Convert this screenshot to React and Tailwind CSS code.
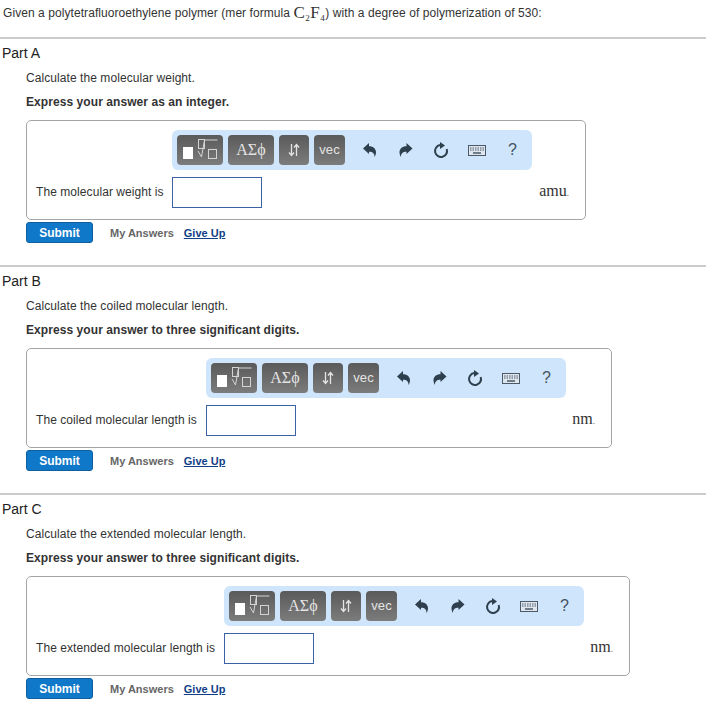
const serif = "font-['Liberation_Serif',serif]";

/** Equation editor toolbar, sits above the answer input */
function Toolbar() {
  return (
    <div className="col-span-2 col-start-2 flex h-10 w-[360px] items-center rounded-md bg-[#cfe5fb] pl-[5px]">
      <button className="flex h-[30px] w-[46px] items-end rounded-[4px] bg-gradient-to-b from-[#5a5a5a] to-[#7c7c7c] pb-[6px] pl-[6px]">
        <span className="h-[12px] w-[10px] bg-white"></span>
        <svg className="ml-[4px]" width="22" height="20" viewBox="0 0 22 20" fill="none" stroke="#d4d4d4" strokeWidth="1">
          <rect x="1.500" y="0.500" width="6" height="9" />
          <path d="M1 12l3.500 6 3-17h13" />
          <rect x="11.500" y="10.500" width="8" height="9" />
        </svg>
      </button>
      <button className={`ml-[5px] h-[30px] w-[46px] rounded-[4px] bg-gradient-to-b from-[#5a5a5a] to-[#7c7c7c] text-[16px] text-[#e4e4e4] ${serif}`}>
        ΑΣϕ
      </button>
      <button className="ml-[5px] flex h-[30px] w-[30px] items-center justify-center rounded-[4px] bg-gradient-to-b from-[#5a5a5a] to-[#7c7c7c]">
        <svg width="14" height="14" viewBox="0 0 14 14" fill="none" stroke="#e4e4e4" strokeWidth="1.300">
          <path d="M4.500 1v11M2 9.500l2.500 3 2.500-3M9.500 13V2M7 4.500l2.500-3 2.500 3" />
        </svg>
      </button>
      <button className="ml-[5px] h-[30px] w-[31px] rounded-[4px] bg-gradient-to-b from-[#5a5a5a] to-[#7c7c7c] text-[13px] text-[#e4e4e4]">
        vec
      </button>
      <svg className="ml-[18px]" width="13" height="14" viewBox="0 0 13 14" fill="#2e3f4e">
        <path d="M0 5.500L6 0v3.300c4.500 0 7 2.700 7 6 0 1.900-.6 3.500-1.500 4.700.2-3.300-1.500-5.300-5.500-5.300V11z" />
      </svg>
      <svg className="ml-[23px]" width="14" height="14" viewBox="0 0 13 14" fill="#2e3f4e">
        <path d="M13 5.500L7 0v3.300c-4.500 0-7 2.700-7 6 0 1.900.6 3.500 1.500 4.700-.2-3.300 1.500-5.300 5.500-5.300V11z" />
      </svg>
      <svg className="ml-[20px]" width="16" height="17" viewBox="0 0 16 17" fill="none" stroke="#2e3f4e" strokeWidth="2">
        <path d="M13.700 7A6 6 0 1 1 7 3.100" />
        <path d="M7 0v7l5-3.500z" fill="#2e3f4e" stroke="none" />
      </svg>
      <svg className="ml-[19px]" width="18" height="11" viewBox="0 0 18 11">
        <rect x="0.500" y="0.500" width="17" height="10" fill="#dfe6ee" stroke="#4a5a6a" />
        <path d="M2 3h14M2 5h14" stroke="#4a5a6a" strokeWidth="1" strokeDasharray="1.500 1" />
        <path d="M5 8h8" stroke="#4a5a6a" strokeWidth="1.500" />
      </svg>
      <span className="ml-[22px] text-[16px] text-[#44525f]">?</span>
    </div>
  );
}

/** One question part: prompt, answer box and action row */
function Part({ name, prompt, express, label, unit, boxClass }) {
  return (
    <section className="border-t-2 border-[#cccccc] pt-[5px]">
      <h3 className="ml-[2px] h-[18px] text-[14px] leading-[18px] font-normal tracking-normal text-[#222]">{name}</h3>
      <div className="pl-[26px]">
        <p className="mt-[8px] h-[16px] leading-[16px]">{prompt}</p>
        <p className="mt-[8px] h-[16px] leading-[16px] font-bold">{express}</p>
        <div className={`mt-[10px] grid h-[100px] content-start rounded-[5px] border border-[#a5a5a5] pt-[9px] pl-[9px] ${boxClass}`}>
          <Toolbar />
          <span className="col-start-1 mt-[7px] mb-[2px] self-center">{label}</span>
          <input className="mt-[7px] h-[31px] w-[90px] border border-[#3a62a5] bg-white" />
          <span className={`mt-[7px] mr-[16px] mb-[3px] self-center text-right text-[16px] tracking-normal ${serif}`}>
            {unit}
            <span className="text-[9px]">.</span>
          </span>
        </div>
        <div className="mt-[2px] flex items-center text-[11px] font-bold tracking-normal">
          <button className="h-[21px] w-[67px] rounded-[3px] border border-[#0f5f9f] bg-[#0f78c8] text-[12px] font-bold text-white">Submit</button>
          <span className="mt-[1px] ml-[17px] text-[#666]">My Answers</span>
          <a className="mt-[1px] ml-[10px] text-[#123f86] underline" href="#">Give Up</a>
        </div>
      </div>
    </section>
  );
}

const parts = [
  {
    name: 'Part A',
    prompt: 'Calculate the molecular weight.',
    express: 'Express your answer as an integer.',
    label: 'The molecular weight is',
    unit: 'amu',
    boxClass: 'w-[560px] grid-cols-[136px_90px_1fr]',
  },
  {
    name: 'Part B',
    prompt: 'Calculate the coiled molecular length.',
    express: 'Express your answer to three significant digits.',
    label: 'The coiled molecular length is',
    unit: 'nm',
    boxClass: 'w-[586px] grid-cols-[170px_90px_1fr]',
  },
  {
    name: 'Part C',
    prompt: 'Calculate the extended molecular length.',
    express: 'Express your answer to three significant digits.',
    label: 'The extended molecular length is',
    unit: 'nm',
    boxClass: 'w-[604px] grid-cols-[188px_90px_1fr]',
  },
];

export default function App() {
  return (
    <div className="h-[719px] w-[706px] overflow-hidden bg-white font-['Liberation_Sans',sans-serif] text-[12px] tracking-[0.07px] text-[#333]">
      <p className="flex h-[37px] items-center pb-[11px] pl-[3px] whitespace-pre">
        Given a polytetrafluoroethylene polymer (mer formula{' '}
        <span className={`text-[17px] tracking-[0.5px] ${serif}`}>
          C<sub className="text-[9px]">2</sub>F<sub className="text-[9px]">4</sub>
        </span>
        ) with a degree of polymerization of 530:
      </p>
      <div className="flex flex-col gap-[22px]">
        {parts.map((part) => (
          <Part key={part.name} {...part} />
        ))}
      </div>
    </div>
  );
}
